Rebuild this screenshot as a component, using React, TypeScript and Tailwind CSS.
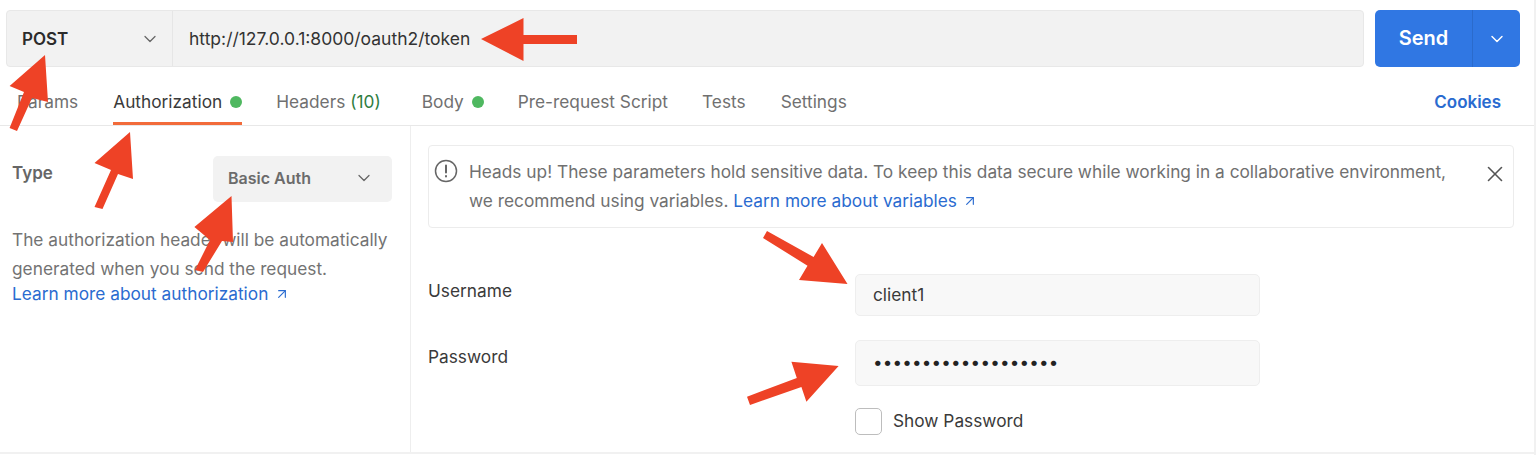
import React from 'react';
import { ArrowUpRight, ChevronDown, X } from 'lucide-react';

const arrows = [
  '45,55 9.6,86 24,92 9.6,128 17,131 32,98 48,102',
  '481,39 523.5,18 523.5,35 577,35 577,44 523.5,44 523.5,61',
  '130,132 94.5,163 111,170 94.5,207 102.5,209 118,174 133,179',
  '231.5,196 194.4,227 210,240 195,270 203,272 222,241 233,242',
  '847.5,284 822,243 813.6,257 767,231 763,238 807.5,265.7 799,280',
  '838.6,366 791.4,361.7 796.8,378 747,396.7 750,405 801.4,387 806.4,401.7',
];

const Tab = ({ label, active, dot, count }: { label: string; active?: boolean; dot?: boolean; count?: string }) => (
  <div className={`h-full flex items-center gap-2 border-b-[3px] pt-[15px] ${active ? 'border-[#f26b3a] text-[#3a3a3a]' : 'border-transparent text-[#707070]'}`}>
    <span>
      {label}
      {count && <span className="text-[#2f7d3f]"> {count}</span>}
    </span>
    {dot && <span className="w-[12px] h-[12px] rounded-full bg-[#4fb860]" />}
  </div>
);

export default function App() {
  return (
    <div className="relative w-[1536px] h-[455px] overflow-hidden bg-white border-r-2 border-[#f1f1f1] font-['Inter',sans-serif] text-[17.3px] flex flex-col">
      <div className="flex gap-[11px] pt-[10px] pl-[6px] pr-[14px]">
        <div className="flex-1 h-[57px] flex bg-[#f2f2f2] border border-[#e8e8e8] rounded-[4px]">
          <div className="w-[166px] flex items-center justify-between pl-[15px] pr-[12px] pt-[2px] border-r border-[#e6e6e6] font-semibold text-[17px] text-[#2b2b2b]">
            <span>POST</span>
            <ChevronDown size={20} strokeWidth={1.5} className="text-[#666] -mt-[2px]" />
          </div>
          <div className="flex items-center pl-[16px] pt-[1px] text-[17.5px] text-[#333]">http://127.0.0.1:8000/oauth2/token</div>
        </div>
        <div className="w-[145px] h-[57px] flex bg-[#3077e3] rounded-[5px] text-white">
          <div className="w-[98px] flex items-center justify-center pb-[1px] border-r border-[#2b6bcc] font-semibold text-[20px]">Send</div>
          <div className="flex-1 flex items-center justify-center">
            <ChevronDown size={20} strokeWidth={1.75} />
          </div>
        </div>
      </div>

      <div className="h-[59px] flex items-center pl-[17px] pr-[33px] border-b border-[#e8e8e8] text-[#707070]">
        <div className="h-full flex gap-[34px]">
          <div className="h-full mr-[1px]">
            <Tab label="Params" />
          </div>
          <Tab label="Authorization" active dot />
          <div className="h-full mr-[7px]">
            <Tab label="Headers" count="(10)" />
          </div>
          <Tab label="Body" dot />
          <Tab label="Pre-request Script" />
          <div className="h-full mr-[1px]">
            <Tab label="Tests" />
          </div>
          <Tab label="Settings" />
        </div>
        <span className="ml-auto pt-[13px] font-semibold text-[17px] text-[#2a6bd0]">Cookies</span>
      </div>

      <div className="h-[328px] flex border-b-2 border-[#f1f1f1]">
        <div className="w-[411px] shrink-0 border-r border-[#eeeeee] pl-[12px] pr-[18px] pt-[30px] text-[#737373]">
          <div className="flex justify-between">
            <span className="pt-[5px] font-semibold text-[17px] text-[#666]">Type</span>
            <div className="w-[179px] h-[46px] flex items-center justify-between pl-[15px] pr-[18px] pb-[2px] bg-[#f2f2f2] rounded-[5px] font-semibold text-[16px] text-[#6b6b6b]">
              <span>Basic Auth</span>
              <ChevronDown size={20} strokeWidth={1.5} className="text-[#666]" />
            </div>
          </div>
          <p className="mt-[23px] leading-[29px]">The authorization header will be automatically generated when you send the request.</p>
          <a className="-mt-[2px] flex items-center gap-[6px] leading-[25px] text-[#2a6bd0]">
            Learn more about authorization <ArrowUpRight size={16} strokeWidth={1.75} />
          </a>
        </div>

        <div className="flex-1 pt-[19px] pl-[17px] pr-[20px]">
          <div className="h-[83px] flex items-start gap-[11px] border border-[#ececec] rounded-[4px] pl-[5px] pr-[5px] pt-[11px] text-[#707070]">
            <svg width="24" height="24" viewBox="0 0 24 24" fill="none" stroke="#666" strokeWidth="1.5" strokeLinecap="round" className="shrink-0 mt-[2px]">
              <circle cx="12" cy="12" r="10.5" />
              <path d="M12 6.5v7M12 17v.5" strokeWidth="2" />
            </svg>
            <p className="flex-1 leading-[29px]">
              Heads up! These parameters hold sensitive data. To keep this data secure while working in a collaborative environment, we recommend using variables.{' '}
              <a className="text-[#2a6bd0]">
                Learn more about variables <ArrowUpRight size={16} strokeWidth={1.75} className="inline mb-[2px]" />
              </a>
            </p>
            <X size={26} strokeWidth={1.5} className="mt-[4px] text-[#555]" />
          </div>

          <div className="mt-[46px] grid grid-cols-[427px_405px] text-[#3a3a3a]">
            <span className="pt-[4px]">Username</span>
            <div className="h-[42px] flex items-center pl-[17px] bg-[#f8f8f8] border border-[#eeeeee] rounded-[5px]">client1</div>
            <span className="mt-[24px] pt-[4px]">Password</span>
            <div className="mt-[24px] h-[46px] flex items-center pl-[17px] bg-[#f8f8f8] border border-[#eeeeee] rounded-[5px] text-[17px] text-[#222] tracking-[0.2px]">•••••••••••••••••••</div>
            <span />
            <label className="mt-[22px] flex items-center gap-[11px]">
              <span className="w-[27px] h-[27px] rounded-[5px] border border-[#bdbdbd] bg-white" />
              <span className="-mt-[2px]">Show Password</span>
            </label>
          </div>
        </div>
      </div>

      <svg className="absolute inset-0 pointer-events-none" width="1536" height="455" viewBox="0 0 1536 455">
        {arrows.map((points, i) => (
          <polygon key={i} points={points} fill="#ee4226" />
        ))}
      </svg>
    </div>
  );
}
